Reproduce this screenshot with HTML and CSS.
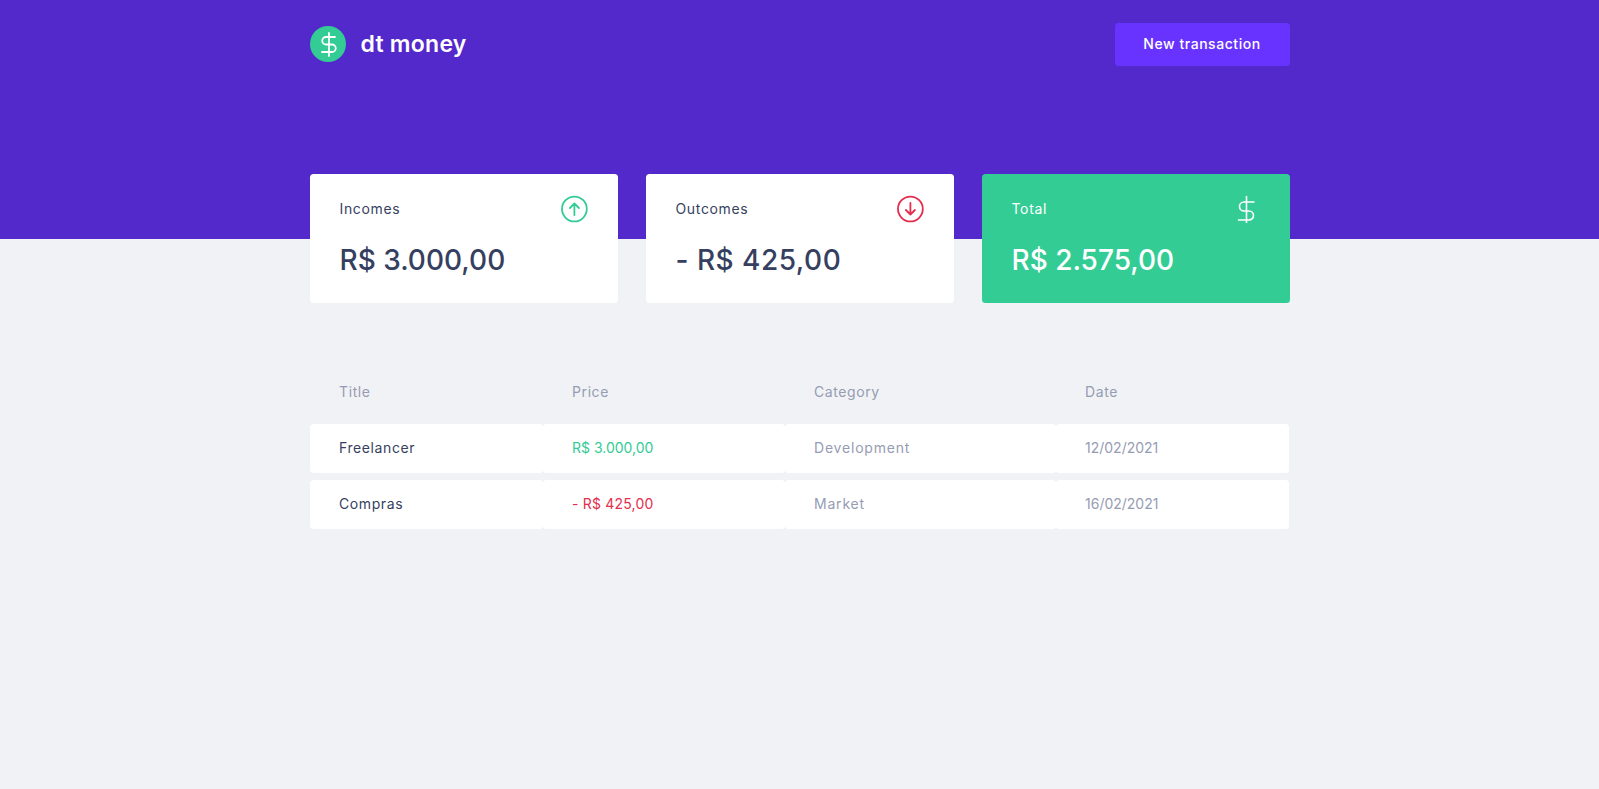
FILE: index.html
```html
<!DOCTYPE html>
<html lang="en">
<head>
    <meta charset="UTF-8">
    <meta name="viewport" content="width=device-width, initial-scale=1.0">
    <title>dt money</title>
    <link rel="stylesheet" href="styles.css">
</head>
<body>
    <header class="header">
        <div class="header-content">
            <div class="logo">
                <svg class="logo-icon" viewBox="0 0 36 36" aria-hidden="true">
                    <circle cx="18" cy="18" r="18" fill="#33cc95"/>
                    <path d="M19 7v23M25 11h-9a3.75 3.75 0 0 0 0 7.5h6a3.75 3.75 0 0 1 0 7.5H12" fill="none" stroke="#fff" stroke-width="1.8" stroke-linecap="round" stroke-linejoin="round"/>
                </svg>
                <span class="logo-text">dt money</span>
            </div>
            <button type="button" class="new-transaction">New transaction</button>
        </div>
    </header>

    <main class="dashboard">
        <section class="summary">
            <div class="card">
                <div class="card-header">
                    <p>Incomes</p>
                    <svg class="card-icon" viewBox="0 0 28 28" aria-hidden="true">
                        <circle cx="14.4" cy="14" r="12.4" fill="none" stroke="#33cc95" stroke-width="1.8"/>
                        <path d="M14.4 20V8.5M9.9 13l4.5-4.5 4.5 4.5" fill="none" stroke="#33cc95" stroke-width="1.8" stroke-linecap="round" stroke-linejoin="round"/>
                    </svg>
                </div>
                <strong>R$ 3.000,00</strong>
            </div>
            <div class="card">
                <div class="card-header">
                    <p>Outcomes</p>
                    <svg class="card-icon" viewBox="0 0 28 28" aria-hidden="true">
                        <circle cx="14.4" cy="14" r="12.4" fill="none" stroke="#e52e4d" stroke-width="1.8"/>
                        <path d="M14.4 8v11.5M9.9 15l4.5 4.5 4.5-4.5" fill="none" stroke="#e52e4d" stroke-width="1.8" stroke-linecap="round" stroke-linejoin="round"/>
                    </svg>
                </div>
                <strong class="negative">- R$ 425,00</strong>
            </div>
            <div class="card card-total">
                <div class="card-header">
                    <p>Total</p>
                    <svg class="card-icon" viewBox="0 0 28 28" aria-hidden="true">
                        <path d="M14.5 1.5v26M22 7H12a4.5 4.5 0 0 0 0 9h5a4.5 4.5 0 0 1 0 9H6.5" fill="none" stroke="#fff" stroke-width="1.6" stroke-linecap="round" stroke-linejoin="round"/>
                    </svg>
                </div>
                <strong>R$ 2.575,00</strong>
            </div>
        </section>

        <table class="transactions">
            <thead>
                <tr>
                    <th class="col-title">Title</th>
                    <th class="col-price">Price</th>
                    <th class="col-category">Category</th>
                    <th class="col-date">Date</th>
                </tr>
            </thead>
            <tbody>
                <tr>
                    <td class="title">Freelancer</td>
                    <td class="income">R$ 3.000,00</td>
                    <td class="word">Development</td>
                    <td>12/02/2021</td>
                </tr>
                <tr>
                    <td class="title">Compras</td>
                    <td class="outcome">- R$ 425,00</td>
                    <td class="word">Market</td>
                    <td>16/02/2021</td>
                </tr>
            </tbody>
        </table>
    </main>
</body>
</html>
```

FILE: styles.css
```css
:root {
    --background: #f0f2f5;
    --blue: #5429cc;
    --blue-light: #6933ff;
    --green: #33cc95;
    --red: #e52e4d;
    --text-title: #363f5f;
    --text-body: #969cb3;
}
* {
    margin: 0;
    padding: 0;
    box-sizing: border-box;
}
body {
    font-family: "Inter", "Noto Sans", sans-serif;
    background-color: var(--background);
    color: var(--text-body);
    font-size: 14px;
}
.header {
    background-color: var(--blue);
    height: 239px;
}
.header-content {
    width: 980px;
    margin: 0 auto;
    padding-top: 23px;
    display: flex;
    justify-content: space-between;
    align-items: flex-start;
}
.logo {
    display: flex;
    align-items: center;
    gap: 15px;
    margin-top: 3px;
}
.logo-icon {
    width: 36px;
    height: 36px;
}
.logo-text {
    color: white;
    font-size: 23px;
    font-weight: 600;
    letter-spacing: 0.25px;
}
.new-transaction {
    width: 175px;
    height: 43px;
    padding-bottom: 2px;
    background-color: var(--blue-light);
    color: white;
    border: none;
    border-radius: 3.5px;
    font-family: inherit;
    font-size: 14px;
    font-weight: 500;
    letter-spacing: 0.55px;
}
.dashboard {
    width: 980px;
    margin: 0 auto;
}
.summary {
    display: grid;
    grid-template-columns: repeat(3, 1fr);
    gap: 28px;
    margin-top: -65px;
}
.card {
    background-color: white;
    color: var(--text-title);
    border-radius: 3.5px;
    padding: 21px 30px;
    height: 129px;
}
.card-header {
    display: flex;
    justify-content: space-between;
    align-items: center;
}
.card-header p {
    letter-spacing: 0.65px;
    padding-bottom: 2px;
}
.card-icon {
    width: 28px;
    height: 28px;
}
.card strong {
    display: block;
    margin-top: 15px;
    font-size: 28px;
    font-weight: 500;
    line-height: 45px;
}
.card strong.negative {
    letter-spacing: 0.5px;
}
.card-total {
    background-color: var(--green);
    color: white;
}
.transactions {
    width: 979px;
    margin-top: 57px;
    border-spacing: 0 7px;
    table-layout: fixed;
}
.col-title { width: 233px; }
.col-price { width: 242px; }
.col-category { width: 271px; }
.col-date { width: 233px; }
th {
    font-weight: 400;
    text-align: left;
    padding: 14px 29.5px;
    line-height: 22px;
    letter-spacing: 0.6px;
}
td {
    background-color: white;
    padding: 13px 29.5px 15px;
    line-height: 21px;
    border-radius: 3.5px;
}
td.title { color: var(--text-title); letter-spacing: 0.6px; }
td.word { letter-spacing: 0.8px; }
td.income { color: var(--green); }
td.outcome { color: var(--red); letter-spacing: 0.2px; }
```
